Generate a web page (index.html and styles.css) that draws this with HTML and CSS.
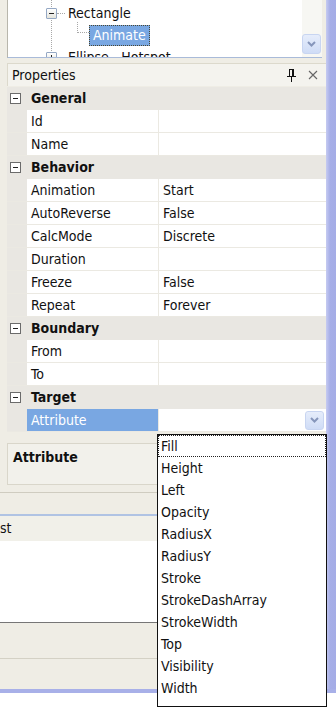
FILE: index.html
```html
<!DOCTYPE html>
<html>
<head>
    <meta charset="UTF-8">
    <title>Properties</title>
    <link rel="stylesheet" href="styles.css">
</head>

<body>
<div class="frame">
    <div class="main">

        <!-- tree of the scene -->
        <div class="tree">
            <div class="treeBody">
                <div class="trunk"></div>
                <div class="node">
                    <span class="exp minus"></span><span class="stub"></span><span class="label">Rectangle</span>
                </div>
                <div class="node child">
                    <span class="elbow"></span><span class="label sel">Animate</span>
                </div>
                <div class="node">
                    <span class="exp plus"></span><span class="stub"></span><span class="label">Ellipse - Hotspot</span>
                </div>
            </div>
            <div class="vscroll">
                <div class="sbtn">
                    <svg width="9" height="6" viewBox="0 0 9 6"><path d="M1 1 L4.5 4.5 L8 1" fill="none" stroke="#8696bb" stroke-width="2"/></svg>
                </div>
            </div>
        </div>

        <div class="propsHead">
            <span>Properties</span>
            <svg class="pin" width="11" height="15" viewBox="0 0 11 15">
                <rect x="3.5" y="1.5" width="4" height="7" fill="none" stroke="#111"/>
                <line x1="6.5" y1="2" x2="6.5" y2="8" stroke="#111"/>
                <line x1="1" y1="8.5" x2="10" y2="8.5" stroke="#111"/>
                <line x1="5.5" y1="9" x2="5.5" y2="14" stroke="#111"/>
            </svg>
            <svg class="close" width="10" height="10" viewBox="0 0 10 10">
                <path d="M1 1 L9 9 M9 1 L1 9" stroke="#666" stroke-width="1.1"/>
            </svg>
        </div>

        <!-- property grid -->
        <div class="grid">
            <div class="row cat"><div class="gut"><span class="box"></span></div><div class="name">General</div></div>
            <div class="row"><div class="gut"></div><div class="name">Id</div><div class="value"></div></div>
            <div class="row"><div class="gut"></div><div class="name">Name</div><div class="value"></div></div>
            <div class="row cat"><div class="gut"><span class="box"></span></div><div class="name">Behavior</div></div>
            <div class="row"><div class="gut"></div><div class="name">Animation</div><div class="value">Start</div></div>
            <div class="row"><div class="gut"></div><div class="name">AutoReverse</div><div class="value">False</div></div>
            <div class="row"><div class="gut"></div><div class="name">CalcMode</div><div class="value">Discrete</div></div>
            <div class="row"><div class="gut"></div><div class="name">Duration</div><div class="value"></div></div>
            <div class="row"><div class="gut"></div><div class="name">Freeze</div><div class="value">False</div></div>
            <div class="row"><div class="gut"></div><div class="name">Repeat</div><div class="value">Forever</div></div>
            <div class="row cat"><div class="gut"><span class="box"></span></div><div class="name">Boundary</div></div>
            <div class="row"><div class="gut"></div><div class="name">From</div><div class="value"></div></div>
            <div class="row"><div class="gut"></div><div class="name">To</div><div class="value"></div></div>
            <div class="row cat"><div class="gut"><span class="box"></span></div><div class="name">Target</div></div>
            <div class="row"><div class="gut"></div><div class="name hl">Attribute</div>
                <div class="value">
                    <div class="dbtn">
                        <svg width="9" height="6" viewBox="0 0 9 6"><path d="M1 1 L4.5 4.5 L8 1" fill="none" stroke="#8696bb" stroke-width="2"/></svg>
                    </div>
                </div>
            </div>
        </div>

        <div class="desc">Attribute</div>

        <div class="sep"></div>
        <div class="blueLine"></div>
        <div class="tabHead">st</div>
        <div class="listArea"></div>
        <div class="darkLine"></div>
        <div class="bar1"></div>
        <div class="bar2"></div>
    </div>
    <div class="edge"></div>
</div>

<!-- open dropdown of the Attribute value -->
<ul class="dropList">
    <li class="focus">Fill</li>
    <li>Height</li>
    <li>Left</li>
    <li>Opacity</li>
    <li>RadiusX</li>
    <li>RadiusY</li>
    <li>Stroke</li>
    <li>StrokeDashArray</li>
    <li>StrokeWidth</li>
    <li>Top</li>
    <li>Visibility</li>
    <li>Width</li>
</ul>
</body>
</html>
```

FILE: styles.css
```css
*{
    box-sizing: border-box;
}
body{
    margin: 0;
    width: 336px;
    height: 713px;
    overflow: hidden;
    position: relative;
    background: #fff;
    font-family: "DejaVu Sans Condensed", "DejaVu Sans", sans-serif;
    font-size: 14px;
    color: #111;
}
.frame{
    display: flex;
    height: 693px;
    border-bottom: 4px solid #a8b0e8;
}
.main{
    width: 326px;
    display: flex;
    flex-direction: column;
    background: #efede5;
}
.edge{
    flex: 1;
    background: linear-gradient(to right, #c6cbf1, #a6aee7 40%, #a4ace6);
}

/* tree */
.tree{
    display: flex;
    height: 58px;
    margin: 0 4px 0 7px;
    border-left: 1px solid #b8b6ac;
    border-bottom: 1px solid #a9bbd9;
    background: #fff;
}
.treeBody{
    flex: 1;
    position: relative;
    overflow: hidden;
    padding-top: 2px;
}
.trunk{
    position: absolute;
    left: 43px;
    top: 0;
    bottom: 0;
    border-left: 1px dotted #a8a8a8;
}
.node{
    display: flex;
    align-items: center;
    height: 22px;
    position: relative;
    white-space: nowrap;
}
.exp{
    width: 11px;
    height: 11px;
    margin-left: 38px;
    border: 1px solid #95a8c4;
    border-radius: 1px;
    background: linear-gradient(#fff, #e4e4dc);
    position: relative;
}
.exp::before{
    content: "";
    position: absolute;
    left: 2px;
    top: 4px;
    width: 5px;
    height: 1px;
    background: #222;
}
.plus::after{
    content: "";
    position: absolute;
    left: 4px;
    top: 2px;
    width: 1px;
    height: 5px;
    background: #222;
}
.stub{
    width: 8px;
    border-top: 1px dotted #a8a8a8;
    margin-right: 2px;
}
.label{
    padding: 0 1px;
}
.child{
    padding-left: 69px;
}
.elbow{
    align-self: flex-start;
    width: 12px;
    height: 11px;
    margin-top: -2px;
    border-left: 1px dotted #a8a8a8;
    border-bottom: 1px dotted #a8a8a8;
}
.sel{
    height: 21px;
    line-height: 19px;
    padding: 0 3px;
    color: #fff;
    background: #79a7e2;
    border: 1px dotted #4a4630;
}
.vscroll{
    width: 20px;
    display: flex;
    flex-direction: column;
    justify-content: flex-end;
    padding-bottom: 3px;
    background: #f7f7f3;
}
.sbtn, .dbtn{
    width: 19px;
    height: 20px;
    display: flex;
    align-items: center;
    justify-content: center;
    border: 1px solid #c8d5f1;
    border-radius: 3px;
    background: linear-gradient(#e6edfb, #cfdcf6);
}

/* properties window */
.propsHead{
    height: 23px;
    margin: 5px 0 1px 7px;
    padding-left: 4px;
    display: flex;
    align-items: center;
    border-top: 1px solid #dcd9cc;
    border-left: 1px solid #dcd9cc;
    background: #f4f3ee;
}
.pin{
    margin-left: auto;
    margin-right: 11px;
}
.close{
    margin-right: 8px;
}
.grid{
    margin-left: 7px;
    background: #fff;
}
.row{
    display: flex;
    height: 23px;
    border-bottom: 1px solid #ebe9e2;
    line-height: 22px;
    white-space: nowrap;
}
.gut{
    width: 20px;
    background: #e9e7e2;
    display: flex;
    align-items: center;
}
.name{
    width: 132px;
    padding-left: 4px;
    border-right: 1px solid #ebe9e2;
}
.value{
    flex: 1;
    padding-left: 4px;
    display: flex;
    align-items: center;
    justify-content: flex-end;
}
.row .value:not(:empty){
    justify-content: flex-start;
}
.cat{
    background: #e9e7e2;
    border-bottom-color: #e9e7e2;
    font-weight: bold;
}
.cat .name{
    border-right: none;
}
.box{
    width: 11px;
    height: 11px;
    margin-left: 3px;
    border: 1px solid #6b6b6b;
    background: #fff;
    position: relative;
}
.box::before{
    content: "";
    position: absolute;
    left: 2px;
    top: 4px;
    width: 5px;
    height: 1px;
    background: #222;
}
.hl{
    color: #fff;
    background: #79a7e2;
}
.row .dbtn{
    height: 19px;
    margin-right: 2px;
    margin-left: auto;
}
.desc{
    height: 42px;
    margin: 11px 0 0 7px;
    padding: 5px 0 0 5px;
    line-height: 16px;
    border: 1px solid #d9d6ca;
    background: #f2f1eb;
    font-weight: bold;
}

/* lower panels */
.sep{
    height: 22px;
    margin-top: 7px;
    border-top: 1px solid #cfccc0;
}
.blueLine{
    height: 2px;
    background: #b0c3e3;
}
.tabHead{
    height: 25px;
    line-height: 25px;
    background: #f1f0e9;
}
.listArea{
    height: 81px;
    background: #fff;
}
.darkLine{
    height: 1px;
    background: #767676;
}
.bar1{
    height: 36px;
    border-bottom: 1px solid #d4d1c5;
}
.bar2{
    height: 30px;
}

/* dropdown */
.dropList{
    position: absolute;
    left: 157px;
    top: 434px;
    width: 170px;
    height: 273px;
    margin: 0;
    padding: 0;
    list-style: none;
    background: #fff;
    border: 1px solid #111;
}
.dropList li{
    height: 22px;
    line-height: 22px;
    padding-left: 3px;
}
.dropList .focus{
    outline: 1px dotted #222;
    outline-offset: -1px;
}
```
